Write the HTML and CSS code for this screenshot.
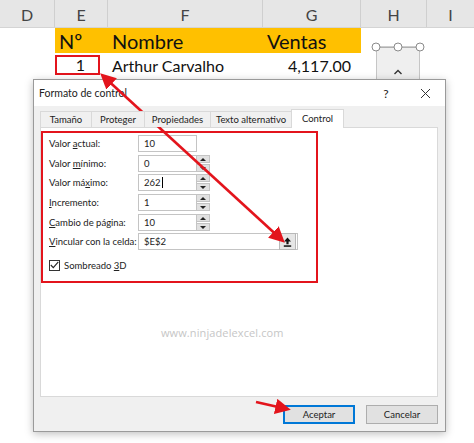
FILE: index.html
```html
<!DOCTYPE html>
<html lang="es">
<head>
<meta charset="utf-8">
<title>Formato de control</title>
<link rel="stylesheet" href="styles.css">
</head>
<body>
<div class="sheet">
  <div class="cols">
    <div class="col c-d">D</div>
    <div class="col c-e">E</div>
    <div class="col c-f">F</div>
    <div class="col c-g">G</div>
    <div class="col c-h">H</div>
    <div class="col c-i">I</div>
  </div>
  <div class="row head">
    <div class="cell c-d"></div>
    <div class="cell c-e hl">Nº</div>
    <div class="cell c-f hl">Nombre</div>
    <div class="cell c-g hl">Ventas</div>
    <div class="cell c-h"></div>
  </div>
  <div class="row data">
    <div class="cell c-d"></div>
    <div class="cell c-e num"><span class="mark">1</span></div>
    <div class="cell c-f">Arthur Carvalho</div>
    <div class="cell c-g num">4,117.00</div>
    <div class="cell c-h"></div>
  </div>
</div>

<!-- spin button form control sitting on the sheet -->
<div class="spinctl">
  <svg class="handles" width="54" height="12" viewBox="0 0 54 12">
    <line x1="5" y1="6" x2="49" y2="6" stroke="#9a9a9a" stroke-width="1"/>
    <circle cx="5" cy="6" r="4" fill="#fff" stroke="#8a8a8a"/>
    <circle cx="27" cy="6" r="4" fill="#fff" stroke="#8a8a8a"/>
    <circle cx="49" cy="6" r="4" fill="#fff" stroke="#8a8a8a"/>
  </svg>
  <div class="spinbody">
    <svg width="10" height="6" viewBox="0 0 10 6"><path d="M1.5 5 L5 1.5 L8.5 5" fill="none" stroke="#333" stroke-width="1.4"/></svg>
  </div>
</div>

<div class="dialog">
  <div class="titlebar">
    <span class="title">Formato de control</span>
    <span class="tbtn help">?</span>
    <span class="tbtn close">
      <svg width="11" height="11" viewBox="0 0 11 11"><path d="M1 1 L10 10 M10 1 L1 10" stroke="#333" stroke-width="1"/></svg>
    </span>
  </div>
  <div class="tabs">
    <div class="tab">Tamaño</div>
    <div class="tab">Proteger</div>
    <div class="tab">Propiedades</div>
    <div class="tab">Texto alternativo</div>
    <div class="tab active">Control</div>
  </div>
  <div class="panel">
    <div class="form">
      <div class="frow">
        <label class="lbl">Valor <u>a</u>ctual:</label>
        <div class="inp">10</div>
      </div>
      <div class="frow">
        <label class="lbl">Valor <u>m</u>ínimo:</label>
        <div class="inp">0</div>
        <div class="spin"><span class="up"></span><span class="dn"></span></div>
      </div>
      <div class="frow">
        <label class="lbl">Valor má<u>x</u>imo:</label>
        <div class="inp">262<span class="caret"></span></div>
        <div class="spin"><span class="up"></span><span class="dn"></span></div>
      </div>
      <div class="frow">
        <label class="lbl"><u>I</u>ncremento:</label>
        <div class="inp">1</div>
        <div class="spin"><span class="up"></span><span class="dn"></span></div>
      </div>
      <div class="frow">
        <label class="lbl"><u>C</u>ambio de página:</label>
        <div class="inp">10</div>
        <div class="spin"><span class="up"></span><span class="dn"></span></div>
      </div>
      <div class="frow">
        <label class="lbl"><u>V</u>incular con la celda:</label>
        <div class="inp wide">$E$2
          <span class="pick">
            <svg width="9" height="10" viewBox="0 0 9 10"><path d="M4.5 0.5 L8 4.5 H5.6 V7.2 H3.4 V4.5 H1 Z" fill="#111"/><rect x="0.8" y="8.3" width="7.4" height="1.5" fill="#111"/></svg>
          </span>
        </div>
      </div>
      <div class="check">
        <span class="box">
          <svg width="9" height="8" viewBox="0 0 9 8"><path d="M0.8 4 L3.3 6.6 L8.3 0.8" fill="none" stroke="#222" stroke-width="1.1"/></svg>
        </span>
        <span>Sombreado <u>3</u>D</span>
      </div>
    </div>
    <div class="watermark">www.ninjadelexcel.com</div>
  </div>
  <div class="footer">
    <button class="btn default">Aceptar</button>
    <button class="btn">Cancelar</button>
  </div>
</div>

<!-- annotation: frame around the control options -->
<div class="frame"></div>

<!-- annotation: arrows -->
<svg class="arrows" width="474" height="443" viewBox="0 0 474 443">
  <defs>
    <marker id="head" markerWidth="6" markerHeight="6" refX="4.5" refY="3" orient="auto-start-reverse" markerUnits="strokeWidth">
      <path d="M0 0 L6 3 L0 6 Z" fill="#e3141c"/>
    </marker>
  </defs>
  <line x1="103" y1="76" x2="282" y2="240" stroke="#e3141c" stroke-width="2.6" marker-start="url(#head)" marker-end="url(#head)"/>
  <line x1="256" y1="402" x2="287" y2="409" stroke="#e3141c" stroke-width="2.6" marker-end="url(#head)"/>
</svg>
</body>
</html>
```
FILE: styles.css
```css
html, body {
  margin: 0;
  padding: 0;
  background: #fff;
}
body {
  width: 474px;
  height: 443px;
  overflow: hidden;
  position: relative;
  font-family: "Lato", "Liberation Sans", sans-serif;
}

/* worksheet */
.sheet {
  display: flex;
  flex-direction: column;
}
.cols, .row {
  display: flex;
}
.c-d { width: 55px; }
.c-e { width: 53px; }
.c-f { width: 155px; }
.c-g { width: 98px; }
.c-h { width: 66px; }
.c-i { width: 47px; }

.cols {
  height: 27px;
  background: #e6e6e6;
  border-bottom: 1px solid #d4d4d4;
}
.col {
  box-sizing: border-box;
  display: flex;
  align-items: center;
  justify-content: center;
  font-size: 16px;
  color: #444;
  border-right: 1px solid #cfcfcf;
  padding-top: 2px;
}
.col.c-i { border-right: 0; }

.row {
  height: 24px;
  align-items: center;
}
.row.head { height: 25px; }
.cell {
  box-sizing: border-box;
  height: 100%;
  display: flex;
  align-items: center;
  padding-left: 4px;
  font-size: 16px;
  color: #111;
}
.cell.hl {
  background: #ffc000;
  font-size: 20px;
}
.cell.num {
  justify-content: flex-end;
  padding-right: 10px;
}
.cell.c-e.num { padding: 0; }
.mark {
  box-sizing: border-box;
  width: 47px;
  height: 20px;
  margin-right: 8px;
  border: 2px solid #e3141c;
  text-align: right;
  padding-right: 13px;
  line-height: 16px;
  font-size: 16px;
}

/* spin button drawn on the sheet */
.spinctl {
  position: absolute;
  left: 371px;
  top: 41px;
  width: 54px;
}
.handles { display: block; }
.spinbody {
  margin: -6px 0 0 5px;
  width: 44px;
  height: 50px;
  background: #efefef;
  border: 1px solid #c6c6c6;
  box-sizing: border-box;
  display: flex;
  justify-content: center;
  padding-top: 21px;
}

/* dialog window */
.dialog {
  position: absolute;
  left: 33px;
  top: 79px;
  width: 413px;
  height: 353px;
  box-sizing: border-box;
  border: 1px solid #9a9a9a;
  background: #f0f0f0;
  box-shadow: 0 2px 8px rgba(0, 0, 0, 0.25);
  display: flex;
  flex-direction: column;
  font-family: "Lato", "Liberation Sans", sans-serif;
  font-size: 9.5px;
  color: #222;
  white-space: nowrap;
}
.titlebar {
  height: 26px;
  background: #fff;
  display: flex;
  align-items: center;
  padding-left: 5px;
  flex-shrink: 0;
}
.title {
  flex: 1;
  font-size: 10.5px;
  color: #222;
}
.tbtn {
  width: 38px;
  display: flex;
  justify-content: center;
  align-items: center;
  font-size: 12px;
}
.tbtn.close { width: 40px; }

.tabs {
  display: flex;
  padding: 5px 0 0 6px;
  height: 16px;
  flex-shrink: 0;
  position: relative;
  z-index: 1;
}
.tab {
  box-sizing: border-box;
  height: 16px;
  padding: 0;
  border: 1px solid #d9d9d9;
  border-bottom: 0;
  margin-right: -1px;
  display: flex;
  align-items: center;
  justify-content: center;
  background: #f0f0f0;
  line-height: 1;
}
.tab:nth-child(1) { width: 52px; }
.tab:nth-child(2) { width: 54px; }
.tab:nth-child(3) { width: 67px; }
.tab:nth-child(4) { width: 82px; }
.tab.active {
  width: 53px;
  height: 19px;
  margin-top: -2px;
  background: #fff;
  border-color: #d9d9d9;
}

.panel {
  margin: 0 7px 0 6px;
  height: 270px;
  background: #fff;
  border: 1px solid #d9d9d9;
  box-sizing: border-box;
  flex-shrink: 0;
  padding: 6px 0 0 8px;
}

.form {
  display: flex;
  flex-direction: column;
}
.frow {
  display: flex;
  align-items: center;
  height: 19.6px;
}
.lbl {
  width: 89px;
  flex-shrink: 0;
}
.lbl u { text-decoration-thickness: 1px; text-underline-offset: 1px; }
.inp {
  box-sizing: border-box;
  width: 59px;
  height: 17px;
  border: 1px solid #c4c4c4;
  background: #fff;
  padding-left: 5px;
  display: flex;
  align-items: center;
  position: relative;
}
.inp.wide { width: 160px; }
.caret {
  display: inline-block;
  width: 1px;
  height: 11px;
  background: #000;
  margin-left: 1px;
}
.spin {
  width: 13px;
  height: 17px;
  display: flex;
  flex-direction: column;
  gap: 1px;
}
.spin span {
  flex: 1;
  background: #e1e1e1;
  border: 1px solid #c4c4c4;
  border-left: 0;
  position: relative;
}
.spin span::after {
  content: "";
  position: absolute;
  left: 3px;
  top: 2px;
  border-left: 3px solid transparent;
  border-right: 3px solid transparent;
}
.spin .up::after { border-bottom: 3px solid #222; }
.spin .dn::after { border-top: 3px solid #222; top: 2px; }

.pick {
  position: absolute;
  right: 1px;
  top: -1px;
  width: 17px;
  height: 17px;
  box-sizing: border-box;
  background: #e6e6e6;
  border: 1px solid #b8b8b8;
  display: flex;
  align-items: center;
  justify-content: center;
}

.check {
  display: flex;
  align-items: center;
  gap: 4px;
  margin-top: 8px;
}
.box {
  box-sizing: border-box;
  width: 11px;
  height: 11px;
  border: 1px solid #333;
  display: flex;
  align-items: center;
  justify-content: center;
  background: #fff;
}

.watermark {
  margin: 54px 0 0 112px;
  font-family: "Open Sans", "Noto Sans", sans-serif;
  font-size: 11px;
  color: #c6c6c6;
  letter-spacing: 0.1px;
}

.footer {
  display: flex;
  justify-content: flex-end;
  gap: 11px;
  padding: 8px 7px 0 0;
}
.btn {
  box-sizing: border-box;
  width: 72px;
  height: 19px;
  background: #e1e1e1;
  border: 1px solid #adadad;
  font-family: "Lato", "Liberation Sans", sans-serif;
  font-size: 9.5px;
  color: #222;
  padding: 0;
}
.btn.default {
  border: 2px solid #0078d7;
}

/* annotations */
.frame {
  position: absolute;
  left: 41px;
  top: 131px;
  width: 277px;
  height: 152px;
  box-sizing: border-box;
  border: 2px solid #e3141c;
}
.arrows {
  position: absolute;
  left: 0;
  top: 0;
  pointer-events: none;
}
```
